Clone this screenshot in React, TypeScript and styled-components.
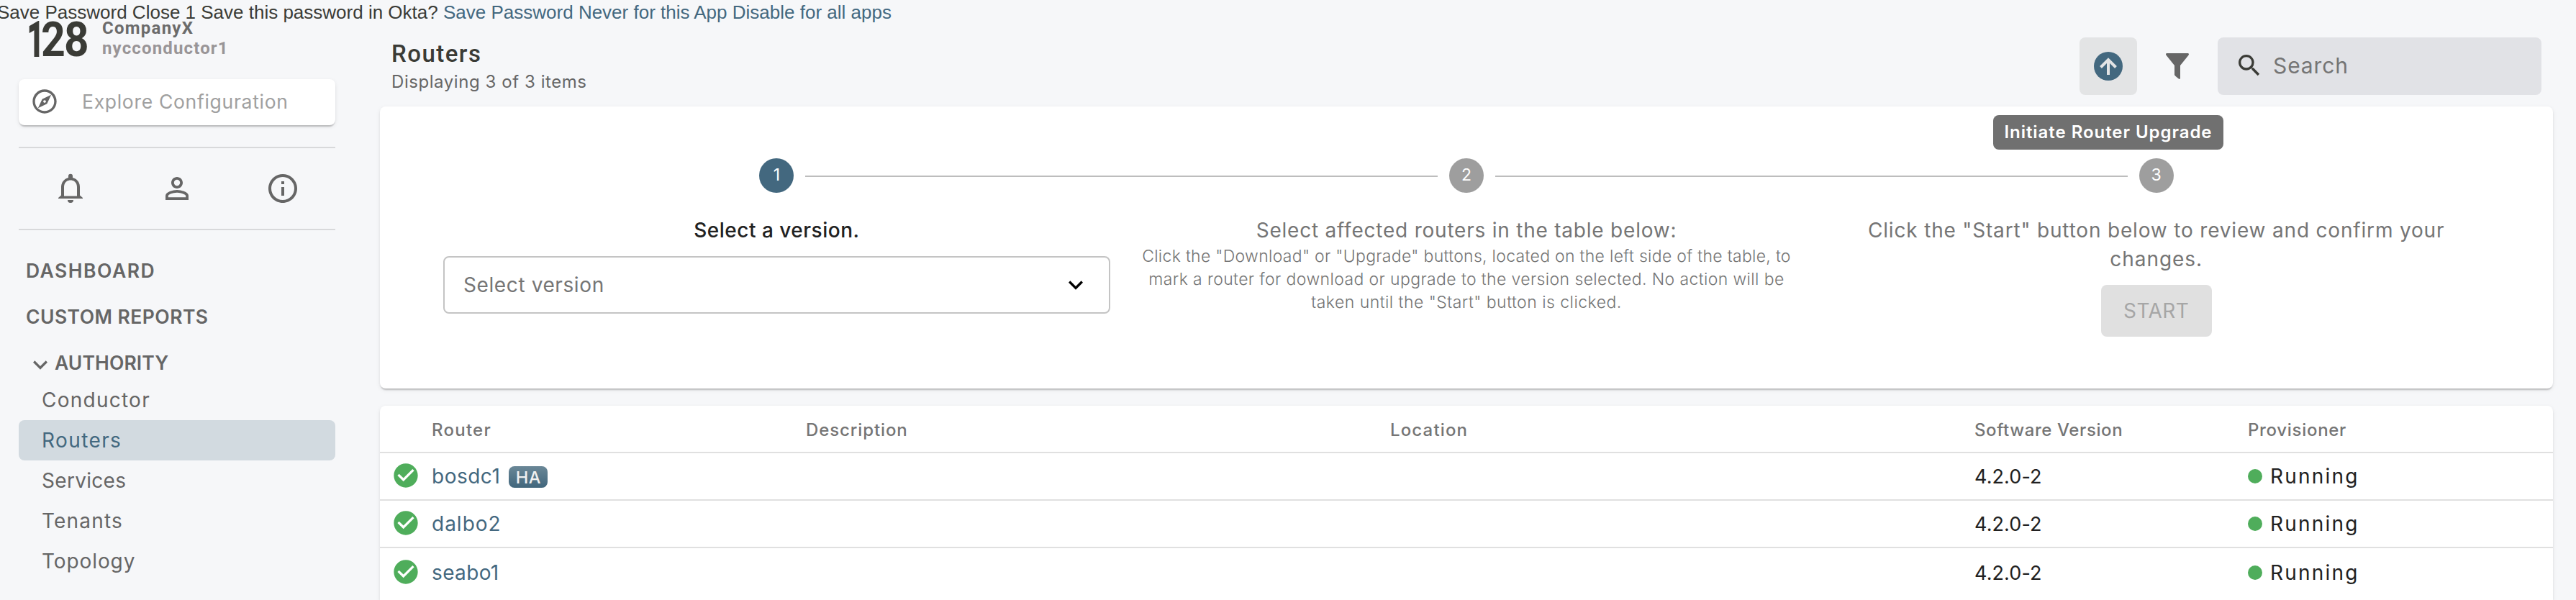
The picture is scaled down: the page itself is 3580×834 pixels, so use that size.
import React from "react";
import styled, { createGlobalStyle } from "styled-components";
import {
  MdCheckCircle,
  MdExpandMore,
  MdInfoOutline,
  MdOutlineExplore,
  MdPersonOutline,
  MdSearch,
} from "react-icons/md";

const GlobalStyle = createGlobalStyle`
  *, *::before, *::after { box-sizing: border-box; }
  body {
    margin: 0;
    background: #f6f7f9;
    font-family: Inter, "Open Sans", sans-serif;
    color: #212121;
  }
`;

const elevation = `box-shadow: 0 4px 2px -2px rgba(0,0,0,.14), 0 2px 2px rgba(0,0,0,.08), 0 2px 6px rgba(0,0,0,.08);`;

const Label = styled.span<{ $track?: number }>`
  letter-spacing: ${(p) => p.$track ?? 0}px;
  white-space: nowrap;
`;

const Page = styled.div`
  position: relative;
  display: flex;
  width: 3580px;
  height: 834px;
  overflow: hidden;
`;

const PasswordPrompt = styled.div`
  position: absolute;
  top: 2px;
  left: -4px;
  font: 26px/30px "Liberation Sans", Arial, sans-serif;
  color: #3a3b36;
  white-space: nowrap;
`;

const PromptLink = styled.a`
  color: #43687f;
`;

/* ---------- sidebar ---------- */

const Sidebar = styled.nav`
  flex: none;
  width: 528px;
  padding: 0 62px 0 26px;
  color: #666;
`;

const Brand = styled.div`
  display: flex;
  height: 110px;
`;

const Logo = styled.svg`
  width: 116px;
  height: 110px;
  fill: #3a3b36;
  font: 700 67px Roboto, sans-serif;
`;

const BrandNames = styled.div`
  padding-top: 25px;
  font: 700 24px/28px Roboto, sans-serif;
`;

const Company = styled.div`
  color: #6b6b6b;
  letter-spacing: 1.25px;
`;

const Conductor = styled.div`
  color: #999597;
  letter-spacing: 1.15px;
`;

const ExploreBox = styled.div`
  display: flex;
  align-items: center;
  height: 64px;
  padding: 0 16px;
  gap: 32px;
  border-radius: 8px;
  background: #fff;
  color: #a0a0a0;
  font-size: 26.5px;
  ${elevation}

  svg { color: #666; margin-top: -2px; }
  span { margin-top: -2px; }
`;

const QuickActions = styled.div`
  display: grid;
  grid-template-columns: repeat(3, 1fr);
  align-items: center;
  justify-items: center;
  height: 116px;
  margin-top: 30px;
  border-top: 2px solid #d8d9db;
  border-bottom: 2px solid #d8d9db;
  color: #666;
`;

const BellIcon = styled.svg`
  width: 40px;
  height: 48px;
  margin-right: 2px;
`;

const NavList = styled.div`
  padding-top: 24px;
`;

const NavSection = styled.div`
  display: flex;
  align-items: center;
  height: 64px;
  padding-left: 10px;
  font-size: 26.5px;
  font-weight: 600;

  svg { margin-top: 6px; }
`;

const NavItems = styled.div`
  margin-top: -8px;
`;

const NavItem = styled.a<{ $active?: boolean }>`
  display: flex;
  align-items: center;
  height: 56px;
  padding-left: 32px;
  border-radius: 8px;
  font-size: 28px;
  color: ${(p) => (p.$active ? "#43687f" : "#666")};
  background: ${(p) => (p.$active ? "#d2dae0" : "transparent")};
`;

/* ---------- main column ---------- */

const Main = styled.main`
  display: flex;
  flex-direction: column;
  flex: none;
  width: 3020px;
`;

const Header = styled.header`
  display: flex;
  justify-content: space-between;
  height: 148px;
  padding: 0 16px;
`;

const Heading = styled.div`
  padding-top: 55px;
`;

const Title = styled.h1`
  margin: 0 0 3px;
  font: 500 33px/40px Roboto, sans-serif;
  letter-spacing: 1.45px;
  color: #3a3b36;
`;

const Subtitle = styled.div`
  font-size: 24px;
  line-height: 32px;
  letter-spacing: 0.56px;
  color: #666;
`;

const Controls = styled.div`
  display: flex;
  gap: 16px;
  padding-top: 52px;
`;

const IconButton = styled.div<{ $active?: boolean }>`
  position: relative;
  display: flex;
  align-items: center;
  justify-content: center;
  width: 80px;
  height: 80px;
  border-radius: 8px;
  background: ${(p) => (p.$active ? "#e3e4e5" : "transparent")};
`;

const Tooltip = styled.div`
  position: absolute;
  top: 108px;
  left: -120px;
  z-index: 1;
  width: 320px;
  height: 48px;
  border-radius: 8px;
  background: #707070;
  color: #fff;
  font-size: 24px;
  font-weight: 600;
  line-height: 47px;
  text-align: center;
`;

const SearchBox = styled.div`
  display: flex;
  align-items: center;
  gap: 13px;
  width: 450px;
  height: 80px;
  padding-left: 24px;
  border-radius: 8px;
  background: #e1e2e6;
  color: #757575;
  font-size: 30px;

  svg { color: #3a3b36; margin-top: -2px; }
  span { margin-top: -2px; }
`;

const Card = styled.section`
  border-radius: 8px;
  background: #fff;
  ${elevation}
`;

const Stepper = styled(Card)`
  display: grid;
  grid-template-columns: repeat(3, 1fr);
  height: 392px;
  padding: 72px 72px 0;
`;

const Step = styled.div`
  display: flex;
  flex-direction: column;
  align-items: center;
`;

const StepHead = styled.div`
  display: flex;
  align-items: center;
  gap: 16px;
  width: 100%;
  margin-bottom: 32px;
`;

const Connector = styled.div<{ $hidden?: boolean }>`
  flex: 1;
  height: 2px;
  margin-top: 2px;
  background: ${(p) => (p.$hidden ? "transparent" : "#bdbdbd")};
`;

const StepNumber = styled.div<{ $active?: boolean }>`
  width: 48px;
  height: 48px;
  border-radius: 50%;
  background: ${(p) => (p.$active ? "#43687f" : "#9e9e9e")};
  color: #fff;
  font-size: 23px;
  line-height: 47px;
  text-align: center;
`;

const StepTitle = styled.div<{ $active?: boolean }>`
  font-size: 28px;
  line-height: 40px;
  text-align: center;
  font-weight: ${(p) => (p.$active ? 500 : 400)};
  color: ${(p) => (p.$active ? "#212121" : "#757575")};
`;

const StepText = styled.div`
  font-size: 23px;
  font-weight: 300;
  line-height: 32px;
  text-align: center;
  color: #757575;
`;

const Select = styled.div`
  display: flex;
  align-items: center;
  justify-content: space-between;
  width: calc(100% - 32px);
  height: 80px;
  margin-top: 16px;
  padding: 0 26px;
  border: 2px solid #c4c4c4;
  border-radius: 8px;
  font-size: 28px;
  color: #757575;

  svg { color: #000; }
`;

const StartButton = styled.div`
  width: 154px;
  height: 72px;
  margin-top: 16px;
  border-radius: 8px;
  background: #e0e0e0;
  color: #a6a6a6;
  font-size: 28px;
  line-height: 72px;
  text-align: center;
`;

const Table = styled(Card)`
  flex: 1;
  margin-top: 24px;
  border-radius: 8px 8px 0 0;
`;

const Row = styled.div<{ $head?: boolean }>`
  display: grid;
  grid-template-columns: 72px 520px 812px 812px 380px 1fr;
  align-items: center;
  height: 66px;
  border-bottom: 2px solid #e0e0e0;
  font-size: ${(p) => (p.$head ? 24 : 28)}px;
  font-weight: ${(p) => (p.$head ? 500 : 400)};
  color: ${(p) => (p.$head ? "#757575" : "#212121")};
  padding-top: ${(p) => (p.$head ? 3 : 0)}px;

  &:last-child { height: 68px; border-bottom: 0; }
`;

const StatusIcon = styled(MdCheckCircle)`
  margin: -2px 0 0 16px;
  color: #4fad5b;
`;

const RouterCell = styled.div`
  display: flex;
  align-items: center;
  gap: 12px;
  color: #43687f;
`;

const HaBadge = styled.span`
  width: 54px;
  height: 30px;
  margin-top: 2px;
  border-radius: 8px;
  background: linear-gradient(#6a8797, #41667c);
  color: #f0f0f0;
  font-size: 23.5px;
  font-weight: 500;
  line-height: 31px;
  text-align: center;
  letter-spacing: 0.5px;
`;

const Version = styled.span`
  font-size: 27px;
  letter-spacing: 0.1px;
`;

const StateCell = styled.div`
  display: flex;
  align-items: center;
  gap: 11px;
`;

const Dot = styled.span`
  width: 20px;
  height: 20px;
  border-radius: 50%;
  background: #4fad5b;
`;

const navItems = [
  { name: "Conductor", track: 1.25 },
  { name: "Routers", track: 1.4, active: true },
  { name: "Services", track: 0.3 },
  { name: "Tenants", track: 1.2 },
  { name: "Topology", track: 0.9 },
];

const columns = [
  { name: "Router", track: 1.25 },
  { name: "Description", track: 0.9 },
  { name: "Location", track: 1.15 },
  { name: "Software Version", track: 0.6 },
  { name: "Provisioner", track: 0.7 },
];

const routers = [
  { name: "bosdc1", track: 0.5, ha: true },
  { name: "dalbo2", track: 1 },
  { name: "seabo1", track: 0.35 },
];

export default function App() {
  return (
    <>
      <GlobalStyle />
      <Page>
        <PasswordPrompt>
          Save Password Close 1 Save this password in Okta?{" "}
          <PromptLink>Save Password</PromptLink> <PromptLink>Never for this App</PromptLink>{" "}
          <PromptLink>Disable for all apps</PromptLink>
        </PasswordPrompt>

        <Sidebar>
          <Brand>
            <Logo viewBox="0 0 116 110">
              <text transform="translate(12 77.500) scale(.6 1)" stroke="#3a3b36" strokeWidth="2">1</text>
              <text transform="translate(31 77.500) scale(.88 1)">2</text>
              <text transform="translate(63 77.500) scale(.9 1)">8</text>
            </Logo>
            <BrandNames>
              <Company>CompanyX</Company>
              <Conductor>nycconductor1</Conductor>
            </BrandNames>
          </Brand>

          <ExploreBox>
            <MdOutlineExplore size={40} />
            <Label $track={0.7}>Explore Configuration</Label>
          </ExploreBox>

          <QuickActions>
            <BellIcon viewBox="0 0 40 48">
              <path
                fill="#666"
                fillRule="evenodd"
                d="M3 38V37L7 33.500V22C7 15.500 11.500 10.300 17 9V6.800a3 3 0 0 1 6 0V9C29 10.300 33 15.500 33 22V33.500L37 37V38ZM11 34.500H29V22C29 16.500 25.500 12.500 20 12.500S11 16.500 11 22Z"
              />
              <path fill="#666" d="M16 40h8a4 4 0 0 1-8 0z" />
            </BellIcon>
            <MdPersonOutline size={48} />
            <MdInfoOutline size={48} />
          </QuickActions>

          <NavList>
            <NavSection><Label $track={1.5}>DASHBOARD</Label></NavSection>
            <NavSection><Label $track={0.45}>CUSTOM REPORTS</Label></NavSection>
            <NavSection>
              <MdExpandMore size={40} />
              <Label $track={0.1}>AUTHORITY</Label>
            </NavSection>
            <NavItems>
              {navItems.map((item) => (
                <NavItem key={item.name} $active={item.active}>
                  <Label $track={item.track}>{item.name}</Label>
                </NavItem>
              ))}
            </NavItems>
          </NavList>
        </Sidebar>

        <Main>
          <Header>
            <Heading>
              <Title>Routers</Title>
              <Subtitle>Displaying 3 of 3 items</Subtitle>
            </Heading>
            <Controls>
              <IconButton $active>
                <svg width="40" height="40" viewBox="0 0 40 40" fill="none">
                  <circle cx="20" cy="20" r="20" fill="#43687f" />
                  <path d="M20 32V11.500M9.500 21.500L20 11L30.500 21.500" stroke="#e3e4e5" strokeWidth="4" />
                </svg>
                <Tooltip><Label $track={0.95}>Initiate Router Upgrade</Label></Tooltip>
              </IconButton>
              <IconButton>
                <svg width="40" height="40" viewBox="0 0 40 40">
                  <path
                    fill="#666"
                    d="M5.500 2H34.500C36 2 36.500 3.500 35.500 4.800L24 19V36.500C24 38 22.800 38.300 21.500 37.300L17 33.500C16.300 32.900 16 32.300 16 31.500V19L4.500 4.800C3.500 3.500 4 2 5.500 2Z"
                  />
                </svg>
              </IconButton>
              <SearchBox>
                <MdSearch size={40} />
                <Label $track={0.9}>Search</Label>
              </SearchBox>
            </Controls>
          </Header>

          <Stepper>
            <Step>
              <StepHead>
                <Connector $hidden />
                <StepNumber $active>1</StepNumber>
                <Connector />
              </StepHead>
              <StepTitle $active><Label $track={0.5}>Select a version.</Label></StepTitle>
              <Select>
                <Label $track={0.6}>Select version</Label>
                <MdExpandMore size={40} />
              </Select>
            </Step>
            <Step>
              <StepHead>
                <Connector />
                <StepNumber>2</StepNumber>
                <Connector />
              </StepHead>
              <StepTitle><Label $track={0.78}>Select affected routers in the table below:</Label></StepTitle>
              <StepText>
                <Label $track={0.3}>Click the "Download" or "Upgrade" buttons, located on the left side of the table, to</Label>
                <br />
                <Label $track={0.38}>mark a router for download or upgrade to the version selected. No action will be</Label>
                <br />
                <Label $track={0.47}>taken until the "Start" button is clicked.</Label>
              </StepText>
            </Step>
            <Step>
              <StepHead>
                <Connector />
                <StepNumber>3</StepNumber>
                <Connector $hidden />
              </StepHead>
              <StepTitle>
                <Label $track={0.82}>Click the "Start" button below to review and confirm your</Label>
                <br />
                <Label $track={0.95}>changes.</Label>
              </StepTitle>
              <StartButton><Label $track={0.4}>START</Label></StartButton>
            </Step>
          </Stepper>

          <Table>
            <Row $head>
              <span />
              {columns.map((c) => (
                <Label key={c.name} $track={c.track}>{c.name}</Label>
              ))}
            </Row>
            {routers.map((r) => (
              <Row key={r.name}>
                <StatusIcon size={40} />
                <RouterCell>
                  <Label $track={r.track}>{r.name}</Label>
                  {r.ha && <HaBadge>HA</HaBadge>}
                </RouterCell>
                <span />
                <span />
                <Version>4.2.0-2</Version>
                <StateCell>
                  <Dot />
                  <Label $track={2.2}>Running</Label>
                </StateCell>
              </Row>
            ))}
          </Table>
        </Main>
      </Page>
    </>
  );
}
